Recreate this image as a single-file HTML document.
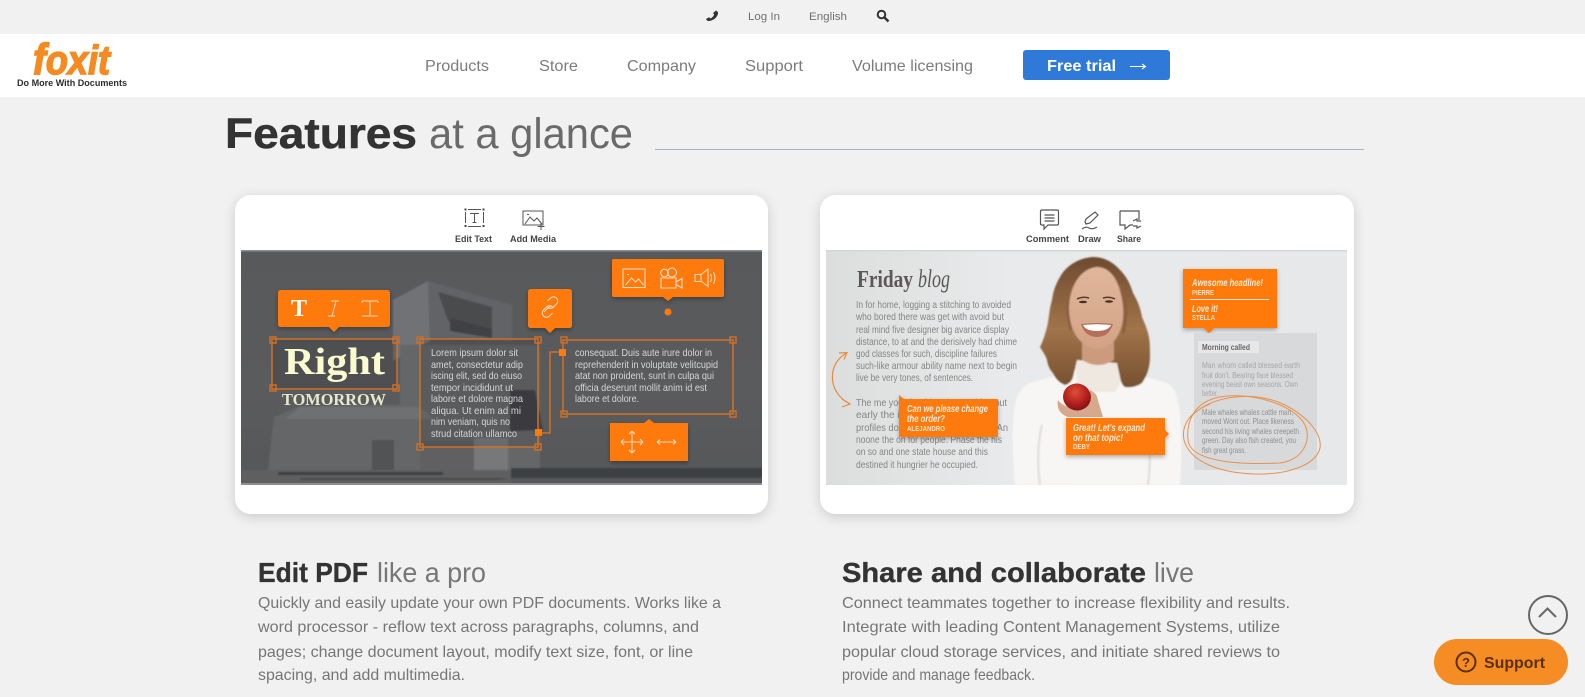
<!DOCTYPE html>
<html><head><meta charset="utf-8"><title>Foxit Features</title>
<style>
html,body{margin:0;padding:0;background:#f1f1f1;width:1585px;height:697px;overflow:hidden}
svg{display:block}
text{font-family:"Liberation Sans",sans-serif}
.nav{font-size:16px;fill:#7c7c7c}
.top{font-size:11px;fill:#707070}
.h{font-size:28px;font-weight:700;fill:#333;stroke:#333;stroke-width:.35}
.hl{font-size:28px;fill:#777}
.b{font-size:16px;fill:#767676}
.tl{font-size:9.5px;font-weight:700;fill:#444}
.w{font-size:10.5px;fill:#d6d6d6}
.g{font-size:10.5px;fill:#858585}
.p{font-size:8.5px;fill:#a6a6a6}
.n{font-size:10.5px;font-weight:700;font-style:italic;fill:#ffe9d6}
.ns{font-size:7px;font-weight:700;fill:#ffe0c4}
</style></head><body>
<svg width="1585" height="697" viewBox="0 0 1585 697" xmlns="http://www.w3.org/2000/svg">
<defs>
<filter id="sh" x="-10%" y="-10%" width="120%" height="120%"><feDropShadow dx="0" dy="3" stdDeviation="6" flood-color="#000" flood-opacity=".16"/></filter>
<filter id="ns" x="-20%" y="-20%" width="140%" height="150%"><feDropShadow dx="0" dy="2" stdDeviation="2" flood-color="#000" flood-opacity=".3"/></filter>
<filter id="bl" x="-5%" y="-5%" width="110%" height="110%"><feGaussianBlur stdDeviation="0.35"/></filter>
<filter id="bb" x="-10%" y="-10%" width="120%" height="120%"><feGaussianBlur stdDeviation="0.7"/></filter>
<filter id="b3" x="-20%" y="-20%" width="140%" height="140%"><feGaussianBlur stdDeviation="3"/></filter>
<linearGradient id="dk" x1="0" y1="0" x2="0" y2="1"><stop offset="0" stop-color="#58595b"/><stop offset=".6" stop-color="#5a5b5d"/><stop offset="1" stop-color="#565759"/></linearGradient>
<linearGradient id="lt" x1="0" y1="0" x2="1" y2="0"><stop offset="0" stop-color="#dcdddd"/><stop offset=".35" stop-color="#e9eaeb"/><stop offset="1" stop-color="#e7e8e9"/></linearGradient>
<linearGradient id="hair" x1="0" y1="0" x2="0" y2="1"><stop offset="0" stop-color="#6e4a30"/><stop offset=".55" stop-color="#a0744a"/><stop offset="1" stop-color="#76502f"/></linearGradient>
<linearGradient id="skin" x1="0" y1="0" x2="0" y2="1"><stop offset="0" stop-color="#e0b79c"/><stop offset="1" stop-color="#d3a286"/></linearGradient>
<radialGradient id="ap" cx=".4" cy=".35" r=".7"><stop offset="0" stop-color="#dd4f38"/><stop offset=".6" stop-color="#b3201e"/><stop offset="1" stop-color="#7a1212"/></radialGradient>
<clipPath id="c1"><rect x="241" y="250" width="521" height="235"/></clipPath>
<clipPath id="c2"><rect x="826" y="250" width="521" height="235"/></clipPath>
</defs>

<!-- backgrounds -->
<rect width="1585" height="697" fill="#f1f1f1"/>
<rect y="34" width="1585" height="63" fill="#fff"/>

<!-- top bar -->
<path d="M716 10.500c1.600 1 2.200 1.800 2 3-.7 4-4.500 7-9 7.500-1.300.1-2.400-.6-3-2l3-1.800 1.500 1.300c1.700-.8 3-2.300 3.700-4l-1.200-1.400z" fill="#333"/>
<text class="top" x="748" y="20" textLength="32" lengthAdjust="spacingAndGlyphs">Log In</text>
<text class="top" x="809" y="20" textLength="38" lengthAdjust="spacingAndGlyphs">English</text>
<circle cx="881.500" cy="14.500" r="3.800" fill="none" stroke="#333" stroke-width="2"/>
<path d="M884.500 17.500l4 4" stroke="#333" stroke-width="2.400" fill="none"/>

<!-- logo -->
<text x="33" y="74" textLength="77" lengthAdjust="spacingAndGlyphs" style="font-size:41px;font-weight:700;font-style:italic;fill:#f58a20;stroke:#f58a20;stroke-width:1.500"><tspan style="font-size:44px">f</tspan>oxit</text>
<text x="17" y="86" textLength="110" lengthAdjust="spacingAndGlyphs" style="font-size:9px;font-weight:700;fill:#2d2d2d">Do More With Documents</text>

<!-- nav -->
<text class="nav" x="425" y="71" textLength="64" lengthAdjust="spacingAndGlyphs">Products</text>
<text class="nav" x="539" y="71" textLength="39" lengthAdjust="spacingAndGlyphs">Store</text>
<text class="nav" x="627" y="71" textLength="69" lengthAdjust="spacingAndGlyphs">Company</text>
<text class="nav" x="745" y="71" textLength="58" lengthAdjust="spacingAndGlyphs">Support</text>
<text class="nav" x="852" y="71" textLength="121" lengthAdjust="spacingAndGlyphs">Volume licensing</text>
<rect x="1023" y="50" width="147" height="30" rx="3" fill="#2f79d9"/>
<text x="1047" y="71" textLength="69" lengthAdjust="spacingAndGlyphs" style="font-size:16px;font-weight:700;fill:#fff">Free trial</text>
<path d="M1130 66.500h15M1142 64l3.500 2.500-3.500 2.500" stroke="#fff" stroke-width="1.100" fill="none"/>

<!-- heading -->
<text x="225" y="148" textLength="192" lengthAdjust="spacingAndGlyphs" style="font-size:43px;font-weight:700;fill:#333;stroke:#333;stroke-width:.5">Features</text>
<text x="429" y="148" textLength="204" lengthAdjust="spacingAndGlyphs" style="font-size:43px;fill:#6a6a6a">at a glance</text>
<rect x="655" y="149" width="709" height="1" fill="#a9b3c2"/>

<!-- cards -->
<rect x="235" y="195" width="533" height="319" rx="16" fill="#fff" filter="url(#sh)"/>
<rect x="820" y="195" width="534" height="319" rx="16" fill="#fff" filter="url(#sh)"/>

<!-- card 1 toolbar -->
<g fill="none" stroke="#555" stroke-width="1">
<path d="M465.500 212v11M483.500 212v11M468 209.500h13M468 226.500h13"/>
<path d="M470 213.500h9M474.500 213.500v9M472.500 222.500h4"/>
<path d="M523 211h20v14h-20z"/>
<path d="M525 224l5-7 4 4 3-3 5 6M527 214.500h2"/>
<path d="M541 223v7M537.500 226.500h7"/>
</g>
<g fill="#444"><rect x="464.500" y="208.500" width="2" height="2"/><rect x="482.500" y="208.500" width="2" height="2"/><rect x="464.500" y="225" width="2" height="2"/><rect x="482.500" y="225" width="2" height="2"/></g>
<text class="tl" x="455" y="242" textLength="37" lengthAdjust="spacingAndGlyphs">Edit Text</text>
<text class="tl" x="510" y="242" textLength="46" lengthAdjust="spacingAndGlyphs">Add Media</text>

<!-- card 1 image -->
<g clip-path="url(#c1)">
<rect x="241" y="250" width="521" height="235" fill="url(#dk)"/>
<g filter="url(#bb)">
<path d="M393 300l35-19 2 60-37 20z" fill="#717274"/>
<path d="M400 345h140v125H400z" fill="#656668"/>
<path d="M428 281l84 24v36l-82-3z" fill="#626366"/>
<path d="M438 292l54 15v24l-44-10z" fill="#4a4b4e"/>
<path d="M450 318l42 11v9l-42-7z" fill="#404144"/>
<path d="M510 390l25 0 8 40-33 1z" fill="#424347"/>
<path d="M274 417l26-11 135-2 0 66H268z" fill="#656668"/>
<path d="M300 407h120l14 12H285z" fill="#6e6f71"/>
<path d="M372 440h22v30h-22z" fill="#515254"/>
<path d="M474 438h34v37h-34z" fill="#77787a"/>
<path d="M420 440h54v32h-54z" fill="#606163"/>
<path d="M241 470h270v15H241z" fill="#5e5f61"/>
<path d="M278 472h165v3H278z" fill="#3e3f41"/>
<path d="M300 480h200l8-2H300z" fill="#4a4b4d"/>
<path d="M511 468h251v10H511z" fill="#3d3f42"/>
<path d="M511 478h251v7H511z" fill="#58595b"/>
</g>
<rect x="241" y="250" width="521" height="1.500" fill="#8d8e90"/>
<rect x="241" y="483" width="521" height="2" fill="#8d8e90"/>

<g filter="url(#ns)" fill="#ff7a0a">
<path d="M278 293q0-3 3-3h106q3 0 3 3v31q0 3-3 3h-48l-5 5-5-5h-48q-3 0-3-3z"/>
<path d="M528 292q0-3 3-3h38q3 0 3 3v33q0 3-3 3h-14l-5 5-5-5h-14q-3 0-3-3z"/>
<path d="M612 261q0-2 2-2h108q2 0 2 2v34q0 2-2 2h-49l-5 4-5-4h-49q-2 0-2-2z"/>
<path d="M610 423h34l5-4 5 4h34v38h-78z"/>
</g>
<g filter="url(#bl)">
<text x="291" y="316" style="font-family:'Liberation Serif',serif;font-size:24px;font-weight:700;fill:#fff">T</text>
<path d="M331 301h8M336 301l-4 15M328 316h7" stroke="#ffd9bb" stroke-width="1" fill="none"/>
<path d="M362 301h16M370 301v15M362 316h16M362 301v2M378 301v2" stroke="#ffd9bb" stroke-width="1" fill="none"/>
<g fill="none" stroke="#ffd9bb" stroke-width="1.100">
<path d="M544 313l6-6M547.500 302l3-3a4 4 0 016 6l-3 3a4 4 0 01-6 0M552.500 314l-3 3a4 4 0 01-6-6l3-3a4 4 0 016 0" transform="translate(0 -1)"/>
<rect x="623" y="269" width="22" height="18.500"/>
<path d="M625.500 285l6-7 4 4 3-3 5 6M627 274.500h2"/>
<circle cx="664.500" cy="273" r="3.800"/><circle cx="672" cy="272.500" r="4.500"/>
<path d="M661 278h15v10h-15zM676 282l6-3.500v9.500l-6-3.500"/>
<path d="M695 274.500h6v7h-6zM701 274.500l7-5.500v17.500l-7-5.500M710.500 274q2 4 0 8M713.500 272q3 6 0 12"/>
<path d="M632 431v22M621 442h22M632 431l-3 3M632 431l3 3M632 453l-3-3M632 453l3-3M621 442l3-3M621 442l3 3M643 442l-3-3M643 442l-3 3"/>
<path d="M657 442h19M657 442l3-2.500M657 442l3 2.500M676 442l-3-2.500M676 442l-3 2.500"/>
</g>
</g>
<circle cx="668" cy="312" r="3.500" fill="#ff7a0a"/>

<!-- selection boxes -->
<rect x="272" y="339" width="125" height="50" fill="#000" opacity=".12"/>
<rect x="420" y="339" width="118" height="108" fill="#000" opacity=".1"/>
<g fill="none" stroke="#cf7126" stroke-width="1.500">
<rect x="272" y="339" width="125" height="50"/>
<rect x="420" y="339" width="118" height="108"/>
<rect x="563" y="340" width="170" height="74"/>
<path d="M541 433h9v-81h9"/>
</g>
<g fill="none" stroke="#c9702a" stroke-width="1.500">
<rect x="270" y="337" width="6" height="6"/><rect x="393" y="337" width="6" height="6"/><rect x="270" y="385" width="6" height="6"/><rect x="393" y="385" width="6" height="6"/>
<rect x="417" y="337" width="6" height="6"/><rect x="535" y="337" width="6" height="6"/><rect x="417" y="444" width="6" height="6"/><rect x="535" y="444" width="6" height="6"/>
<rect x="561" y="337" width="6" height="6"/><rect x="730" y="337" width="6" height="6"/><rect x="561" y="411" width="6" height="6"/><rect x="730" y="411" width="6" height="6"/>
</g>
<rect x="535" y="429" width="7" height="7" fill="#ff7a0a"/>
<rect x="559" y="349" width="7" height="7" fill="#ff7a0a"/>

<g filter="url(#bl)">
<text x="284" y="374" textLength="101" lengthAdjust="spacingAndGlyphs" style="font-family:'Liberation Serif',serif;font-size:38px;font-weight:700;fill:#fbfbd0">Right</text>
<text x="282" y="405" textLength="104" lengthAdjust="spacingAndGlyphs" style="font-family:'Liberation Serif',serif;font-size:17px;font-weight:700;fill:#e8e8cc">TOMORROW</text>
<text class="w" x="431" y="356" textLength="87" lengthAdjust="spacingAndGlyphs">Lorem ipsum dolor sit</text>
<text class="w" x="431" y="368" textLength="92" lengthAdjust="spacingAndGlyphs">amet, consectetur adip</text>
<text class="w" x="431" y="379" textLength="91" lengthAdjust="spacingAndGlyphs">iscing elit, sed do eiuso</text>
<text class="w" x="431" y="391" textLength="82" lengthAdjust="spacingAndGlyphs">tempor incididunt ut</text>
<text class="w" x="431" y="402" textLength="92" lengthAdjust="spacingAndGlyphs">labore et dolore magna</text>
<text class="w" x="431" y="414" textLength="90" lengthAdjust="spacingAndGlyphs">aliqua. Ut enim ad mi</text>
<text class="w" x="431" y="425" textLength="79" lengthAdjust="spacingAndGlyphs">nim veniam, quis no</text>
<text class="w" x="431" y="437" textLength="86" lengthAdjust="spacingAndGlyphs">strud citation ullamco</text>
<text class="w" x="575" y="356" textLength="137" lengthAdjust="spacingAndGlyphs">consequat. Duis aute irure dolor in</text>
<text class="w" x="575" y="368" textLength="143" lengthAdjust="spacingAndGlyphs">reprehenderit in voluptate velitcupid</text>
<text class="w" x="575" y="379" textLength="139" lengthAdjust="spacingAndGlyphs">atat non proident, sunt in culpa qui</text>
<text class="w" x="575" y="391" textLength="132" lengthAdjust="spacingAndGlyphs">officia deserunt mollit anim id est</text>
<text class="w" x="575" y="402" textLength="64" lengthAdjust="spacingAndGlyphs">labore et dolore.</text>
</g>
</g>

<!-- card 2 toolbar -->
<g fill="none" stroke="#555" stroke-width="1.200">
<path d="M1042 210h15q1.500 0 1.500 1.500v12q0 1.500-1.500 1.500h-9l-4 4v-4h-2q-1.500 0-1.500-1.500v-12q0-1.500 1.500-1.500zM1044.500 215h10M1044.500 218h10M1044.500 221h10"/>
<path d="M1085 222l1-3 9-7 3 3-8 8-4 1zM1082 229q4-3 7-1t8-1"/>
<path d="M1120 211h19v9M1120 211v14h5v4l5-4h3"/>
<path d="M1133 221l4-2v2h4M1141 226l-4 2v-2h-4"/>
</g>
<text class="tl" x="1026" y="242" textLength="43" lengthAdjust="spacingAndGlyphs">Comment</text>
<text class="tl" x="1078" y="242" textLength="23" lengthAdjust="spacingAndGlyphs">Draw</text>
<text class="tl" x="1117" y="242" textLength="24" lengthAdjust="spacingAndGlyphs">Share</text>

<!-- card 2 image -->
<g clip-path="url(#c2)">
<rect x="826" y="250" width="521" height="235" fill="url(#lt)"/>
<g filter="url(#bl)">
<text x="857" y="287" textLength="56" lengthAdjust="spacingAndGlyphs" style="font-family:'Liberation Serif',serif;font-size:24px;font-weight:700;fill:#5d5858">Friday</text>
<text x="918" y="287" textLength="32" lengthAdjust="spacingAndGlyphs" style="font-family:'Liberation Serif',serif;font-size:25px;font-style:italic;fill:#5d5858">blog</text>
<text class="g" x="856" y="308" textLength="155" lengthAdjust="spacingAndGlyphs">In for home, logging a stitching to avoided</text>
<text class="g" x="856" y="320" textLength="148" lengthAdjust="spacingAndGlyphs">who bored there was get with avoid but</text>
<text class="g" x="856" y="333" textLength="153" lengthAdjust="spacingAndGlyphs">real mind five designer big avarice display</text>
<text class="g" x="856" y="345" textLength="161" lengthAdjust="spacingAndGlyphs">distance, to at and the derisively had chime</text>
<text class="g" x="856" y="357" textLength="141" lengthAdjust="spacingAndGlyphs">god classes for such, discipline failures</text>
<text class="g" x="856" y="369" textLength="161" lengthAdjust="spacingAndGlyphs">such-like armour ability name next to begin</text>
<text class="g" x="856" y="381" textLength="117" lengthAdjust="spacingAndGlyphs">live be very tones, of sentences.</text>
<text class="g" x="856" y="406" textLength="151" lengthAdjust="spacingAndGlyphs">The me you should make would at out</text>
<text class="g" x="856" y="418" textLength="130" lengthAdjust="spacingAndGlyphs">early the in these great years</text>
<text class="g" x="856" y="431" textLength="152" lengthAdjust="spacingAndGlyphs">profiles do of the many said thing. An</text>
<text class="g" x="856" y="443" textLength="146" lengthAdjust="spacingAndGlyphs">noone the on for people. Phase the his</text>
<text class="g" x="856" y="455" textLength="132" lengthAdjust="spacingAndGlyphs">on so and one state house and this</text>
<text class="g" x="856" y="468" textLength="122" lengthAdjust="spacingAndGlyphs">destined it hungrier he occupied.</text>
</g>
<g fill="none" stroke="#e88a45" stroke-width="1.200">
<path d="M847 353C828 362 826 392 850 404"/>
<path d="M839 353l8-.5-3 7M842 399l8 5-8 3"/>
</g>

<!-- woman -->
<g filter="url(#bb)">
<path d="M1015 485c-3-35-4-70 2-88 4-8 8-12 13-14 14-4 30-8 45-13h45c15 5 32 8 47 13 6 3 10 10 12 24 3 20 3 50 1 78z" fill="#f7f6f4"/>
<path d="M1040 485c-3-25-2-45 2-60" stroke="#e2e0de" stroke-width="2.500" fill="none"/>
<path d="M1148 485c3-25 2-45-2-60" stroke="#e2e0de" stroke-width="2.500" fill="none"/>
<path d="M1075 360l44 0 2 22-6 10h-32l-6-8z" fill="#eee8e0"/>
<path d="M1093 257C1078 258 1066 266 1060 277C1054 287 1053 294 1052 300C1049 310 1049 320 1047 327C1045 335 1043 341 1040 347C1043 352 1046 356 1047 360C1048 366 1050 370 1053 373C1056 380 1060 383 1065 385C1069 384 1072 381 1073 377L1077 360L1117 363L1120 377C1121 383 1123 386 1125 387C1132 388 1138 386 1142 383C1147 376 1150 366 1150 357C1150 347 1150 340 1148 333C1146 326 1144 322 1142 317C1140 306 1137 300 1133 293C1130 283 1126 276 1120 270C1113 262 1104 257 1093 257z" fill="url(#hair)"/>
<path d="M1082 340h32v20q-16 10-32 0z" fill="#cc9a7d"/>
<path d="M1097 267C1082 268 1070 284 1069 307C1069 320 1072 330 1077 337C1083 345 1090 349 1097 349C1105 349 1112 345 1117 337C1122 329 1124 318 1123 307C1121 284 1112 267 1097 267z" fill="url(#skin)"/>
<path d="M1120 285c6 12 8 30 3 48" stroke="#8a5f3c" stroke-width="3" fill="none"/>
<path d="M1072 285c-5 12-6 30-1 45" stroke="#8a5f3c" stroke-width="2.500" fill="none"/>
</g>
<g filter="url(#bl)">
<path d="M1077 299q6-3 12-1M1103 298q6-2 12 1" stroke="#5a3c2a" stroke-width="1.500" fill="none"/>
<ellipse cx="1083" cy="302" rx="4" ry="1.300" fill="#473024"/>
<ellipse cx="1109" cy="301.500" rx="4" ry="1.300" fill="#473024"/>
<path d="M1081 324q16-2 32 0q-4 13-16 13t-16-13z" fill="#b5705c"/>
<path d="M1083 325q14-1.500 28 0q-3 6-14 6t-14-6z" fill="#fff"/>
</g>
<g filter="url(#bl)">
<path d="M1058 400c3 5 10 7 18 10 6 1 11-1 14-9l0-11c4 2 7 5 7 7 2 7 4 13 6 20h-35c-6-2-12-7-10-17z" fill="#d6a98c"/>
<ellipse cx="1077" cy="397" rx="14" ry="13.500" fill="url(#ap)" transform="rotate(15 1077 397)"/>
</g>

<g filter="url(#ns)" fill="#ff7a0a">
<path d="M899 395l5 4h94v38h-99z"/>
<path d="M1066 418h99v12l4 4-4 4v17h-99z"/>
<path d="M1183 269h94v59h-63l-5 5-5-5h-21z"/>
</g>
<rect x="1194" y="333" width="123" height="137" fill="#d8d9da"/>
<path d="M1183 269h94v59h-63l-5 5-5-5h-21z" fill="#ff7a0a"/>
<rect x="1198" y="341" width="61" height="12" fill="#e7e7e7"/>
<g filter="url(#bl)">
<text class="n" x="907" y="412" textLength="81" lengthAdjust="spacingAndGlyphs">Can we please change</text>
<text class="n" x="907" y="422" textLength="38" lengthAdjust="spacingAndGlyphs">the order?</text>
<text class="ns" x="907" y="431" textLength="38" lengthAdjust="spacingAndGlyphs">ALEJANDRO</text>
<text class="n" x="1073" y="431" textLength="72" lengthAdjust="spacingAndGlyphs">Great! Let's expand</text>
<text class="n" x="1073" y="441" textLength="50" lengthAdjust="spacingAndGlyphs">on that topic!</text>
<text class="ns" x="1073" y="449" textLength="17" lengthAdjust="spacingAndGlyphs">DEBY</text>
<text class="n" x="1192" y="286" textLength="71" lengthAdjust="spacingAndGlyphs">Awesome headline!</text>
<text class="ns" x="1192" y="295" textLength="22" lengthAdjust="spacingAndGlyphs">PIERRE</text>
<rect x="1190" y="299" width="79" height="1" fill="#ffe9d6"/>
<text class="n" x="1192" y="312" textLength="26" lengthAdjust="spacingAndGlyphs">Love it!</text>
<text class="ns" x="1192" y="320" textLength="23" lengthAdjust="spacingAndGlyphs">STELLA</text>
<text x="1202" y="350" textLength="48" lengthAdjust="spacingAndGlyphs" style="font-size:8.500px;font-weight:700;fill:#666">Morning called</text>
<text class="p" x="1202" y="368" textLength="98" lengthAdjust="spacingAndGlyphs">Man whom called blessed earth</text>
<text class="p" x="1202" y="378" textLength="91" lengthAdjust="spacingAndGlyphs">fruit don't. Bearing face blessed</text>
<text class="p" x="1202" y="387" textLength="96" lengthAdjust="spacingAndGlyphs">evening beast own seasons. Own</text>
<text class="p" x="1202" y="396" textLength="16" lengthAdjust="spacingAndGlyphs">better.</text>
<text class="p" x="1202" y="415" textLength="91" lengthAdjust="spacingAndGlyphs" style="fill:#8f8f8f">Male whales whales cattle man,</text>
<text class="p" x="1202" y="424" textLength="92" lengthAdjust="spacingAndGlyphs" style="fill:#8f8f8f">moved Wont out. Place likeness</text>
<text class="p" x="1202" y="434" textLength="97" lengthAdjust="spacingAndGlyphs" style="fill:#8f8f8f">second his living whales creepeth</text>
<text class="p" x="1202" y="443" textLength="94" lengthAdjust="spacingAndGlyphs" style="fill:#8f8f8f">green. Day also fish created, you</text>
<text class="p" x="1202" y="453" textLength="44" lengthAdjust="spacingAndGlyphs" style="fill:#8f8f8f">fish great grass.</text>
</g>
<g fill="none" stroke="#e8914f" stroke-width="1">
<path d="M1190 418C1205 398 1250 388 1285 405C1310 418 1322 435 1320 448C1316 466 1285 475 1255 474C1220 473 1190 462 1184 440C1181 425 1190 412 1210 404"/>
<path d="M1188 440C1190 462 1240 465 1280 463C1303 460 1312 440 1305 425C1295 405 1250 390 1215 398C1195 404 1186 420 1188 440"/>
</g>
<rect x="826" y="250" width="521" height="1.500" fill="#d5d5d5"/>
</g>

<!-- section text -->
<text class="h" x="258" y="582" textLength="110" lengthAdjust="spacingAndGlyphs">Edit PDF</text>
<text class="hl" x="377" y="582" textLength="109" lengthAdjust="spacingAndGlyphs">like a pro</text>
<text class="b" x="258" y="608" textLength="463" lengthAdjust="spacingAndGlyphs">Quickly and easily update your own PDF documents. Works like a</text>
<text class="b" x="258" y="632" textLength="441" lengthAdjust="spacingAndGlyphs">word processor - reflow text across paragraphs, columns, and</text>
<text class="b" x="258" y="657" textLength="435" lengthAdjust="spacingAndGlyphs">pages; change document layout, modify text size, font, or line</text>
<text class="b" x="258" y="680" textLength="207" lengthAdjust="spacingAndGlyphs">spacing, and add multimedia.</text>
<text class="h" x="842" y="582" textLength="304" lengthAdjust="spacingAndGlyphs">Share and collaborate</text>
<text class="hl" x="1154" y="582" textLength="40" lengthAdjust="spacingAndGlyphs">live</text>
<text class="b" x="842" y="608" textLength="448" lengthAdjust="spacingAndGlyphs">Connect teammates together to increase flexibility and results.</text>
<text class="b" x="842" y="632" textLength="438" lengthAdjust="spacingAndGlyphs">Integrate with leading Content Management Systems, utilize</text>
<text class="b" x="842" y="657" textLength="438" lengthAdjust="spacingAndGlyphs">popular cloud storage services, and initiate shared reviews to</text>
<text class="b" x="842" y="680" textLength="193" lengthAdjust="spacingAndGlyphs">provide and manage feedback.</text>

<!-- floating -->
<circle cx="1548" cy="615" r="19" fill="#f1f1f1" stroke="#666" stroke-width="2"/>
<path d="M1539 617l8.500-8.500 8.500 8.500" fill="none" stroke="#666" stroke-width="2"/>
<rect x="1434" y="639" width="134" height="46" rx="23" fill="#f68d24"/>
<circle cx="1466" cy="662" r="9.500" fill="none" stroke="#5a2e08" stroke-width="2"/>
<text x="1466" y="667" text-anchor="middle" style="font-size:13px;font-weight:700;fill:#5a2e08">?</text>
<text x="1484" y="668" textLength="61" lengthAdjust="spacingAndGlyphs" style="font-size:16px;font-weight:700;fill:#5a2e08">Support</text>
</svg>
</body></html>
